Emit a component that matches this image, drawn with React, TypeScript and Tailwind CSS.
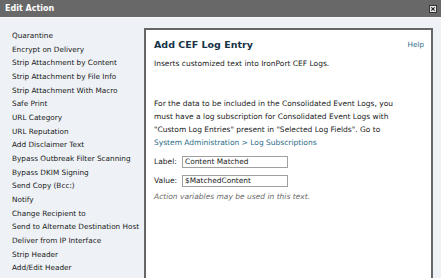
const actions = [
  "Quarantine",
  "Encrypt on Delivery",
  "Strip Attachment by Content",
  "Strip Attachment by File Info",
  "Strip Attachment With Macro",
  "Safe Print",
  "URL Category",
  "URL Reputation",
  "Add Disclaimer Text",
  "Bypass Outbreak Filter Scanning",
  "Bypass DKIM Signing",
  "Send Copy (Bcc:)",
  "Notify",
  "Change Recipient to",
  "Send to Alternate Destination Host",
  "Deliver from IP Interface",
  "Strip Header",
  "Add/Edit Header",
];

function CloseIcon() {
  return (
    <svg width="8" height="8" viewBox="0 0 8 8" className="block">
      <rect x="0.5" y="0.5" width="7" height="7" fill="#e8e8e8" stroke="#333" />
      <path d="M2.3 2.3 L5.7 5.7 M5.7 2.3 L2.3 5.7" stroke="#222" strokeWidth="1.1" />
    </svg>
  );
}

export default function App() {
  return (
    <div
      className="w-[441px] h-[278px] overflow-hidden flex flex-col bg-[#eef2f6] text-[#1a1a1a]"
      style={{ fontFamily: '"DejaVu Sans", Verdana, sans-serif' }}
    >
      <div className="h-[18px] shrink-0 bg-[#686868] flex items-center justify-between pl-[5px] pr-[4px] border-b border-[#f7f9fb]">
        <span className="text-[8px] font-bold text-white">Edit Action</span>
        <CloseIcon />
      </div>

      <div className="flex flex-1 min-h-0">
        <ul className="w-[144px] shrink-0 pl-[12px] pt-[11px] text-[7.3px] leading-[13.65px]">
          {actions.map((a) => (
            <li key={a} className="whitespace-nowrap">{a}</li>
          ))}
        </ul>

        <div className="flex-1 mt-[10px] mr-[8px] bg-white border-2 border-b-0 border-[#666] pl-[8px] pr-[7px] pt-[5px] text-[7.5px] leading-[13px]">
          <div className="flex items-center justify-between h-[18px]">
            <h1 className="text-[9.5px] font-bold text-[#163247]">Add CEF Log Entry</h1>
            <span className="text-[#2b6c87] text-[7.2px]">Help</span>
          </div>
          <p className="mt-[4px]">Inserts customized text into IronPort CEF Logs.</p>
          <p className="mt-[27px]">
            For the data to be included in the Consolidated Event Logs, you
            <br />
            must have a log subscription for Consolidated Event Logs with
            <br />
            "Custom Log Entries" present in "Selected Log Fields". Go to
            <br />
            <span className="text-[#2b6c87]">System Administration &gt; Log Subscriptions</span>
          </p>
          <div className="mt-[6px] flex items-center gap-[3px]">
            <span className="w-[25px]">Label:</span>
            <div className="w-[106px] h-[12px] border border-[#a0a0a0] bg-white px-[2px] text-[7.4px] leading-[10px]">Content Matched</div>
          </div>
          <div className="mt-[6px] flex items-center gap-[3px]">
            <span className="w-[25px]">Value:</span>
            <div className="w-[106px] h-[12px] border border-[#a0a0a0] bg-white px-[2px] text-[7.4px] leading-[10px]">$MatchedContent</div>
          </div>
          <p className="italic text-[#6a6a6a] mt-[3px]">Action variables may be used in this text.</p>
        </div>
      </div>
    </div>
  );
}
